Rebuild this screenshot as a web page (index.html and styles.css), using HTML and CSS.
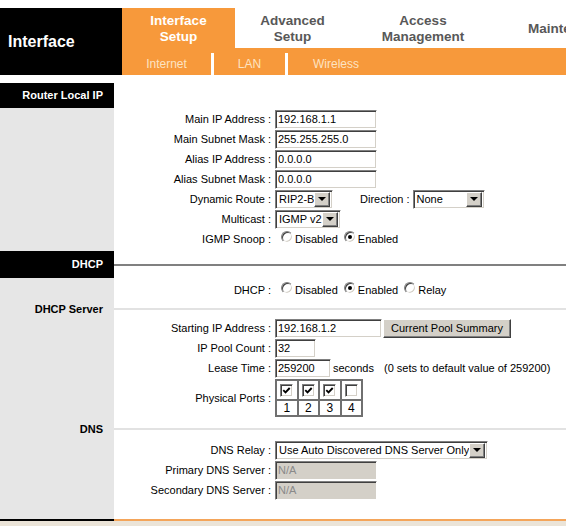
FILE: index.html
```html
<!DOCTYPE html>
<html lang="en">
<head>
    <meta charset="UTF-8">
    <meta name="viewport" content="width=device-width, initial-scale=1.0">
    <title>Interface Setup - LAN</title>
    <link rel="stylesheet" href="styles.css">
</head>
<body>
  <div class="header">
    <div class="brand">Interface</div>
    <div class="nav">
      <div class="tabs">
        <div class="tab tab-active">Interface<br>Setup</div>
        <div class="tab tab-adv">Advanced<br>Setup</div>
        <div class="tab tab-wide">Access<br>Management</div>
        <div class="tab tab-wide">Maintenance</div>
      </div>
      <div class="subnav">
        <div class="sub-item sub-internet">Internet</div>
        <div class="sub-sep"></div>
        <div class="sub-item sub-lan">LAN</div>
        <div class="sub-sep"></div>
        <div class="sub-item sub-wireless">Wireless</div>
      </div>
    </div>
  </div>

  <div class="main">
    <!-- Router Local IP -->
    <div class="section section-head head-lan">
      <div class="side">Router Local IP</div>
      <div class="content"></div>
    </div>
    <div class="section">
      <div class="side"></div>
      <div class="content fields fields-lan">
        <div class="row"><label>Main IP Address :</label><input class="text w-ip" type="text" value="192.168.1.1"></div>
        <div class="row"><label>Main Subnet Mask :</label><input class="text w-ip" type="text" value="255.255.255.0"></div>
        <div class="row"><label>Alias IP Address :</label><input class="text w-ip" type="text" value="0.0.0.0"></div>
        <div class="row"><label>Alias Subnet Mask :</label><input class="text w-ip" type="text" value="0.0.0.0"></div>
        <div class="row">
          <label>Dynamic Route :</label>
          <div class="select w-route"><span class="value">RIP2-B</span><span class="arrow"></span></div>
          <span class="inline-label">Direction :</span>
          <div class="select w-dir"><span class="value">None</span><span class="arrow"></span></div>
        </div>
        <div class="row">
          <label>Multicast :</label>
          <div class="select w-igmp"><span class="value">IGMP v2</span><span class="arrow"></span></div>
        </div>
        <div class="row">
          <label>IGMP Snoop :</label>
          <div class="radio-group">
            <span class="option"><span class="radio"></span>Disabled</span>
            <span class="option"><span class="radio checked"></span>Enabled</span>
          </div>
        </div>
      </div>
    </div>

    <!-- DHCP -->
    <div class="section section-head head-dhcp">
      <div class="side">DHCP</div>
      <div class="content rule-box"><div class="rule rule-dark"></div></div>
    </div>
    <div class="section">
      <div class="side"></div>
      <div class="content fields fields-dhcp">
        <div class="row">
          <label>DHCP :</label>
          <div class="radio-group">
            <span class="option"><span class="radio"></span>Disabled</span>
            <span class="option"><span class="radio checked"></span>Enabled</span>
            <span class="option"><span class="radio"></span>Relay</span>
          </div>
        </div>
      </div>
    </div>

    <div class="section section-sub sub-server">
      <div class="side">DHCP Server</div>
      <div class="content rule-box"><div class="rule"></div></div>
    </div>
    <div class="section">
      <div class="side"></div>
      <div class="content fields">
        <div class="row">
          <label>Starting IP Address :</label>
          <input class="text w-start" type="text" value="192.168.1.2">
          <button class="btn" type="button">Current Pool Summary</button>
        </div>
        <div class="row"><label>IP Pool Count :</label><input class="text w-count" type="text" value="32"></div>
        <div class="row">
          <label>Lease Time :</label>
          <input class="text w-lease" type="text" value="259200">
          <span class="unit">seconds</span>
          <span class="hint">(0 sets to default value of 259200)</span>
        </div>
        <div class="row row-ports">
          <label>Physical Ports :</label>
          <table class="ports">
            <tr class="ports-checks">
              <td><span class="check"><svg width="9" height="9" viewBox="0 0 9 9"><path d="M1.3 4.2 L3.5 6.4 L7.7 2" stroke="#000" stroke-width="1.9" fill="none"/></svg></span></td>
              <td><span class="check"><svg width="9" height="9" viewBox="0 0 9 9"><path d="M1.3 4.2 L3.5 6.4 L7.7 2" stroke="#000" stroke-width="1.9" fill="none"/></svg></span></td>
              <td><span class="check"><svg width="9" height="9" viewBox="0 0 9 9"><path d="M1.3 4.2 L3.5 6.4 L7.7 2" stroke="#000" stroke-width="1.9" fill="none"/></svg></span></td>
              <td><span class="check"></span></td>
            </tr>
            <tr class="ports-nums">
              <td>1</td><td>2</td><td>3</td><td>4</td>
            </tr>
          </table>
        </div>
      </div>
    </div>

    <!-- DNS -->
    <div class="section section-sub sub-dns">
      <div class="side">DNS</div>
      <div class="content rule-box"><div class="rule"></div></div>
    </div>
    <div class="section">
      <div class="side"></div>
      <div class="content fields fields-dns">
        <div class="row">
          <label>DNS Relay :</label>
          <div class="select w-relay"><span class="value">Use Auto Discovered DNS Server Only</span><span class="arrow"></span></div>
        </div>
        <div class="row"><label>Primary DNS Server :</label><input class="text w-ip" type="text" value="N/A" disabled></div>
        <div class="row"><label>Secondary DNS Server :</label><input class="text w-ip" type="text" value="N/A" disabled></div>
      </div>
    </div>

    <div class="footer-line">
      <div class="side"></div>
      <div class="content"></div>
    </div>
    <div class="footer-strip"></div>
  </div>
</body>
</html>
```

FILE: styles.css
```css
* {
    margin: 0;
    padding: 0;
    box-sizing: border-box;
}

body {
    width: 566px;
    font-family: "Liberation Sans", Arial, sans-serif;
    font-size: 11px;
    color: #000;
    background: #fff;
    overflow: hidden;
}

/* top navigation */
.header {
    display: flex;
    height: 67px;
    margin-top: 8px;
}

.brand {
    width: 122px;
    flex-shrink: 0;
    background: #000;
    color: #fff;
    font-size: 16px;
    font-weight: bold;
    padding-left: 8px;
    display: flex;
    align-items: center;
}

.nav {
    flex: 1;
    min-width: 0;
    display: flex;
    flex-direction: column;
    overflow: hidden;
}

.tabs {
    display: flex;
    height: 40px;
}

.tab {
    flex-shrink: 0;
    display: flex;
    align-items: center;
    justify-content: center;
    padding-top: 2px;
    text-align: center;
    font-size: 13.5px;
    font-weight: bold;
    line-height: 16px;
    color: #585858;
    white-space: nowrap;
}

.tab-active {
    width: 113px;
    background: #f7993b;
    color: #fff;
}

.tab-adv {
    width: 115px;
}

.tab-wide {
    width: 146px;
}

.subnav {
    height: 27px;
    background: #f7993b;
    display: flex;
    align-items: flex-end;
}

.sub-item {
    flex-shrink: 0;
    text-align: center;
    font-size: 12px;
    line-height: 22px;
    color: #fde3c2;
}

.sub-internet { width: 89px; }
.sub-lan { width: 71px; }
.sub-wireless { width: 96px; }

.sub-sep {
    width: 3px;
    height: 22px;
    background: #fff;
}

/* page body */
.main {
    margin-top: 8px;
}

.section {
    display: flex;
}

.side {
    width: 114px;
    flex-shrink: 0;
    background: #e6e6e6;
    text-align: right;
    padding-right: 11px;
    font-weight: bold;
    font-size: 11px;
}

.content {
    flex: 1;
    min-width: 0;
}

.section-head .side {
    background: #000;
    color: #fff;
}

.head-lan .side {
    height: 25px;
    line-height: 25px;
}

.head-dhcp .side {
    height: 27px;
    line-height: 27px;
}

.sub-server .side {
    height: 18px;
    line-height: 18px;
}

.sub-dns .side {
    height: 22px;
    line-height: 22px;
}

.rule-box {
    display: flex;
    align-items: center;
}

.rule {
    width: 100%;
    height: 2px;
    background: #e2e2e2;
}

.rule-dark {
    background: #808080;
}

.fields-lan {
    padding: 1px 0 2px;
}

.fields-dhcp {
    padding-top: 2px;
}

.fields-dns {
    padding-bottom: 19px;
}

.row {
    display: flex;
    align-items: center;
    height: 20px;
    white-space: nowrap;
}

.row label {
    width: 161px;
    flex-shrink: 0;
    text-align: right;
    padding-right: 4px;
}

.row-ports {
    height: 40px;
}

/* classic sunken controls */
.text {
    height: 19px;
    border: 1px solid;
    border-color: #808080 #fff #fff #808080;
    box-shadow: inset 1px 1px 0 #404040, inset -1px -1px 0 #d4d0c8;
    background: #fff;
    font-family: "Liberation Sans", Arial, sans-serif;
    font-size: 11px;
    color: #000;
    padding: 0 2px;
    outline: none;
}

.text:disabled {
    background: #d4d0c8;
    color: #8a8a8a;
}

.w-ip { width: 102px; }
.w-start { width: 107px; }
.w-count { width: 41px; }
.w-lease { width: 56px; }

.select {
    display: flex;
    align-items: center;
    height: 19px;
    padding: 2px;
    border: 1px solid;
    border-color: #808080 #fff #fff #808080;
    box-shadow: inset 1px 1px 0 #404040, inset -1px -1px 0 #d4d0c8;
    background: #fff;
}

.select .value {
    flex: 1;
    padding-left: 1px;
    overflow: hidden;
}

.select .arrow {
    width: 16px;
    height: 15px;
    flex-shrink: 0;
    background: #d4d0c8;
    border: 1px solid;
    border-color: #fff #404040 #404040 #fff;
    box-shadow: inset -1px -1px 0 #808080;
    display: flex;
    align-items: center;
    justify-content: center;
}

.select .arrow::after {
    content: '';
    border-left: 4px solid transparent;
    border-right: 4px solid transparent;
    border-top: 4px solid #000;
}

.w-route { width: 58px; }
.w-dir { width: 72px; }
.w-igmp { width: 66px; }
.w-relay { width: 213px; }

.inline-label {
    margin: 0 3px 0 27px;
}

.radio-group {
    display: flex;
    align-items: center;
    padding-left: 6px;
}

.option {
    display: flex;
    align-items: center;
    margin-right: 6px;
}

.radio {
    width: 12px;
    height: 12px;
    margin: 0 2px 5px 0;
    border-radius: 50%;
    border: 1px solid;
    border-color: #808080 #fff #fff #808080;
    box-shadow: inset 1px 1px 0 #404040, inset -1px -1px 0 #d4d0c8;
    background: #fff;
    display: flex;
    align-items: center;
    justify-content: center;
}

.radio.checked::after {
    content: '';
    width: 4px;
    height: 4px;
    border-radius: 50%;
    background: #000;
}

.btn {
    width: 128px;
    height: 19px;
    margin-left: 1px;
    background: #d4d0c8;
    border: 1px solid;
    border-color: #fff #404040 #404040 #fff;
    box-shadow: inset -1px -1px 0 #808080;
    font-family: "Liberation Sans", Arial, sans-serif;
    font-size: 11px;
    color: #000;
}

.unit {
    margin-left: 2px;
}

.hint {
    margin-left: 10px;
}

/* physical ports */
.ports {
    width: 88px;
    border-collapse: separate;
    border-spacing: 0;
    border: 1px solid #707070;
}

.ports td {
    border: 1px solid #707070;
    text-align: center;
    font-size: 12px;
    padding: 0;
}

.ports-checks td {
    height: 20px;
}

.ports-nums td {
    height: 16px;
    line-height: 14px;
}

.check {
    width: 13px;
    height: 13px;
    margin: 0 auto;
    border: 1px solid;
    border-color: #808080 #fff #fff #808080;
    box-shadow: inset 1px 1px 0 #404040, inset -1px -1px 0 #d4d0c8;
    background: #fff;
    display: flex;
    align-items: center;
    justify-content: center;
}

/* bottom edge */
.footer-line {
    display: flex;
    height: 2px;
}

.footer-line .side {
    background: #000;
}

.footer-line .content {
    background: #f4a55a;
}

.footer-strip {
    height: 10px;
    background: #ebe4d8;
}
```
